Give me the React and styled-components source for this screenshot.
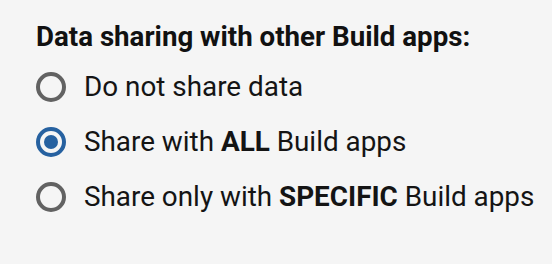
import React, { useState } from 'react';
import styled, { createGlobalStyle } from 'styled-components';

const GlobalStyle = createGlobalStyle`
  html, body {
    margin: 0;
    padding: 0;
    background: #f5f5f5;
    font-family: Roboto, "Liberation Sans", sans-serif;
  }
`;

const Panel = styled.fieldset`
  margin: 0;
  border: none;
  padding: 22px 0 0 36px;
  display: flex;
  flex-direction: column;
`;

const Legend = styled.div`
  font-size: 27.7px;
  font-weight: 700;
  color: #111111;
  line-height: 30px;
  margin-bottom: 20px;
`;

const Options = styled.div`
  display: flex;
  flex-direction: column;
  gap: 25px;
`;

const Option = styled.label`
  display: flex;
  align-items: center;
  gap: 18px;
  cursor: pointer;
  font-size: 27.85px;
  color: #141414;
  line-height: 30px;

  b {
    font-weight: 700;
  }
`;

const HiddenInput = styled.input`
  position: absolute;
  opacity: 0;
  width: 0;
  height: 0;
`;

const Radio = styled.span`
  box-sizing: border-box;
  width: 30px;
  height: 30px;
  border-radius: 50%;
  border: 4px solid ${(p) => (p.$checked ? '#2661a0' : '#626262')};
  display: flex;
  align-items: center;
  justify-content: center;
  flex-shrink: 0;

  &::after {
    content: '';
    width: 14px;
    height: 14px;
    border-radius: 50%;
    background: #2661a0;
    display: ${(p) => (p.$checked ? 'block' : 'none')};
  }
`;

const options = [
  { id: 'none', label: <>Do not share data</> },
  { id: 'all', label: <>Share with <b>ALL</b> Build apps</> },
  { id: 'specific', label: <>Share only with <b>SPECIFIC</b> Build apps</> },
];

export default function App() {
  const [value, setValue] = useState('all');
  return (
    <>
      <GlobalStyle />
      <Panel>
        <Legend>Data sharing with other Build apps:</Legend>
        <Options>
          {options.map((o) => (
            <Option key={o.id}>
              <HiddenInput
                type="radio"
                name="sharing"
                checked={value === o.id}
                onChange={() => setValue(o.id)}
              />
              <Radio $checked={value === o.id} />
              <span>{o.label}</span>
            </Option>
          ))}
        </Options>
      </Panel>
    </>
  );
}
